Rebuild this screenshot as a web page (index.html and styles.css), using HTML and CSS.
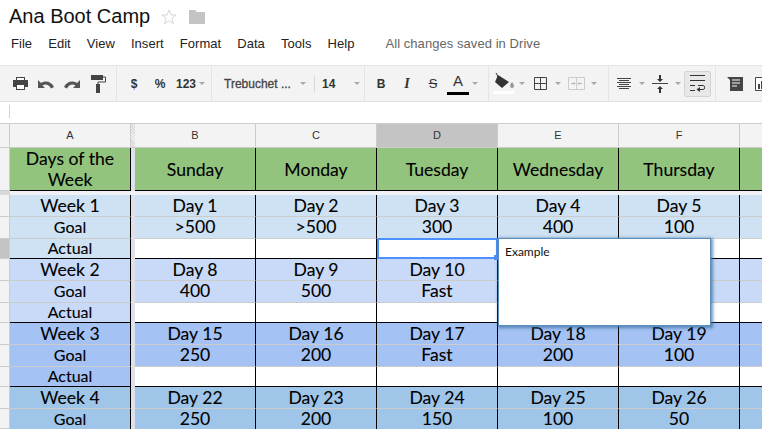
FILE: index.html
```html
<!DOCTYPE html>
<html lang="en">
<head>
<meta charset="UTF-8">
<title>Ana Boot Camp</title>
<link rel="stylesheet" href="styles.css">
</head>
<body>
<header class="title-row">
    <h1>Ana Boot Camp</h1>
    <svg class="star" width="16" height="16" viewBox="0 0 16 16"><path d="M8 1l2 5h5l-4 3.400 1.500 5.400L8 11.600l-4.500 3.200L5 9.400 1 6h5z" fill="#fff" stroke="#d4d4d4"/></svg>
    <svg class="folder" width="16" height="14" viewBox="0 0 16 14"><path d="M0 0h6l2 2h8v12H0z" fill="#c4c4c4"/></svg>
</header>
<nav class="menu-row">
    <a>File</a><a>Edit</a><a>View</a><a>Insert</a><a>Format</a><a>Data</a><a>Tools</a><a>Help</a>
    <span class="saved">All changes saved in Drive</span>
</nav>
<div class="toolbar">
    <div class="group group-history">
        <span class="tool"><svg width="15" height="13" viewBox="0 0 15 13"><path d="M3 0h9v3h3v7h-3v3H3v-3H0V3h3z" fill="#444"/><path d="M4 1h7v2H4zM4 8h7v4H4z" fill="#fff"/></svg></span>
        <span class="tool"><svg width="16" height="10" viewBox="0 0 16 10"><path d="M0 1v8h7L4.500 6.500C7.500 4.500 11 5.500 13 9.500L16 8C13.500 2.500 7.500 1 3 4z" fill="#555"/></svg></span>
        <span class="tool"><svg width="16" height="10" viewBox="0 0 16 10"><path d="M16 1v8H9l2.500-2.500C8.500 4.500 5 5.500 3 9.500L0 8C2.500 2.500 8.500 1 13 4z" fill="#555"/></svg></span>
        <span class="tool"><svg width="15" height="18" viewBox="0 0 15 18"><path d="M0 0h12v5H0z" fill="#444"/><path d="M12 2h2.500v5H7v3" fill="none" stroke="#444"/><path d="M5 9h4v9H5z" fill="#444"/></svg></span>
    </div>
    <div class="group group-number">
        <span class="tool"><b class="glyph">$</b></span>
        <span class="tool"><b class="glyph">%</b></span>
        <b class="glyph number-format">123</b><i class="caret"></i>
    </div>
    <div class="group group-font">
        <b class="font-name">Trebuchet ...</b><i class="caret"></i>
        <span class="short-sep"></span>
        <b class="font-size">14</b><i class="caret"></i>
    </div>
    <div class="group group-style">
        <span class="tool"><b class="glyph glyph-b">B</b></span>
        <span class="tool"><b class="glyph glyph-i">I</b></span>
        <span class="tool"><b class="glyph glyph-s">S</b></span>
        <span class="tool tool-color"><span class="glyph-a">A</span><span class="color-bar"></span></span><i class="caret"></i>
    </div>
    <div class="group group-cell">
        <span class="tool"><svg width="22" height="21" viewBox="0 0 22 21"><path d="M5 2l11 7-7 6-7-6z" fill="#333"/><path d="M3 0l4 7" stroke="#333" fill="none"/><path d="M19 9c1.500 2 2 3 2 4a2 2 0 0 1-4 0c0-1 .5-2 2-4z" fill="#999"/><path d="M0 18h21v3H0z" fill="#fff"/></svg></span><i class="caret"></i>
        <span class="tool"><svg width="13" height="13" viewBox="0 0 13 13"><path d="M.5.500h12v12H.5zM6.500.500v12M.5 6.500h12" fill="none" stroke="#444"/></svg></span><i class="caret"></i>
        <span class="tool"><svg width="17" height="13" viewBox="0 0 17 13"><path d="M.5.500h16v12H.5zM8.500.500v12" fill="none" stroke="#ccc"/><path d="M3 6.500h4M5.500 5l1.500 1.500L5.500 8M14 6.500h-4M11.500 5L10 6.500 11.500 8" fill="none" stroke="#bbb"/></svg></span><i class="caret"></i>
    </div>
    <div class="group group-align">
        <span class="tool"><svg width="14" height="11" viewBox="0 0 14 11"><path d="M0 .5h14M2 2.500h10M0 4.500h14M2 6.500h10M0 8.500h14M2 10.500h10" stroke="#444"/></svg></span><i class="caret"></i>
        <span class="tool"><svg width="16" height="18" viewBox="0 0 16 18"><path d="M0 8.500h16" stroke="#444"/><path d="M7 0h2v4h2L8 7 5 4h2zM7 18h2v-4h2l-3-3-3 3h2z" fill="#333"/></svg></span><i class="caret"></i>
        <span class="tool tool-active"><svg width="15" height="17" viewBox="0 0 15 17"><path d="M0 .5h15M0 5.500h15M0 10.500h5M0 15.500h5" stroke="#333"/><path d="M8 10.500h5.500q1 0 1 2t-1 2H9" fill="none" stroke="#333"/><path d="M10 12v5L6.500 14.500z" fill="#333"/></svg></span>
    </div>
    <div class="group group-insert">
        <span class="tool"><svg width="16" height="14" viewBox="0 0 16 14"><path d="M0 0h16v14H3V3z" fill="#444"/><path d="M5 3h8M5 6h8M5 9h5" stroke="#fff"/></svg></span>
        <span class="tool"><svg width="14" height="16" viewBox="0 0 14 16"><path d="M1.500 1.500h11v13h-11z" fill="#fff" stroke="#444"/><path d="M4 8h2v5H4zM7 5h2v8H7zM10 9h2v4h-2z" fill="#444"/></svg></span>
    </div>
</div>
<div class="formula-bar"><span class="cursor"></span></div>
<div class="sheet">
    <div class="corner"></div>
    <div class="col-head">A</div><div class="freeze-col"></div>
    <div class="col-head">B</div><div class="col-head">C</div><div class="col-head col-active">D</div><div class="col-head">E</div><div class="col-head">F</div><div class="col-head"></div>

    <div class="row-head"></div>
    <div class="cell days title-cell">Days of the Week</div><div class="gap"></div>
    <div class="cell days">Sunday</div><div class="cell days">Monday</div><div class="cell days">Tuesday</div><div class="cell days">Wednesday</div><div class="cell days">Thursday</div><div class="cell days"></div>

    <div class="freeze-row"></div>

    <div class="row-head"></div>
    <div class="cell week1 top">Week 1</div><div class="gap"></div>
    <div class="cell week1 top">Day 1</div><div class="cell week1 top">Day 2</div><div class="cell week1 top">Day 3</div><div class="cell week1 top">Day 4</div><div class="cell week1 top">Day 5</div><div class="cell week1"></div>
    <div class="row-head"></div>
    <div class="cell week1 small">Goal</div><div class="gap"></div>
    <div class="cell week1">&gt;500</div><div class="cell week1">&gt;500</div><div class="cell week1">300</div><div class="cell week1">400</div><div class="cell week1">100</div><div class="cell week1"></div>
    <div class="row-head row-active"></div>
    <div class="cell week1 small end">Actual</div><div class="gap"></div>
    <div class="cell end"></div><div class="cell end"></div><div class="cell end selected"><span class="handle"></span></div><div class="cell end"></div><div class="cell end"></div><div class="cell end"></div>

    <div class="row-head"></div>
    <div class="cell week2 top">Week 2</div><div class="gap"></div>
    <div class="cell week2 top">Day 8</div><div class="cell week2 top">Day 9</div><div class="cell week2 top">Day 10</div><div class="cell week2 top">Day 11</div><div class="cell week2 top">Day 12</div><div class="cell week2"></div>
    <div class="row-head"></div>
    <div class="cell week2 small">Goal</div><div class="gap"></div>
    <div class="cell week2">400</div><div class="cell week2">500</div><div class="cell week2">Fast</div><div class="cell week2">200</div><div class="cell week2">100</div><div class="cell week2"></div>
    <div class="row-head"></div>
    <div class="cell week2 small end">Actual</div><div class="gap"></div>
    <div class="cell end"></div><div class="cell end"></div><div class="cell end"></div><div class="cell end"></div><div class="cell end"></div><div class="cell end"></div>

    <div class="row-head"></div>
    <div class="cell week3 top">Week 3</div><div class="gap"></div>
    <div class="cell week3 top">Day 15</div><div class="cell week3 top">Day 16</div><div class="cell week3 top">Day 17</div><div class="cell week3 top">Day 18</div><div class="cell week3 top">Day 19</div><div class="cell week3"></div>
    <div class="row-head"></div>
    <div class="cell week3 small">Goal</div><div class="gap"></div>
    <div class="cell week3">250</div><div class="cell week3">200</div><div class="cell week3">Fast</div><div class="cell week3">200</div><div class="cell week3">100</div><div class="cell week3"></div>
    <div class="row-head"></div>
    <div class="cell week3 small end">Actual</div><div class="gap"></div>
    <div class="cell end"></div><div class="cell end"></div><div class="cell end"></div><div class="cell end"></div><div class="cell end"></div><div class="cell end"></div>

    <div class="row-head"></div>
    <div class="cell week4 top">Week 4</div><div class="gap"></div>
    <div class="cell week4 top">Day 22</div><div class="cell week4 top">Day 23</div><div class="cell week4 top">Day 24</div><div class="cell week4 top">Day 25</div><div class="cell week4 top">Day 26</div><div class="cell week4"></div>
    <div class="row-head"></div>
    <div class="cell week4 small last">Goal</div><div class="gap"></div>
    <div class="cell week4 last">250</div><div class="cell week4 last">200</div><div class="cell week4 last">150</div><div class="cell week4 last">100</div><div class="cell week4 last">50</div><div class="cell week4 last"></div>

    <div class="note">Example</div>
</div>
</body>
</html>
```

FILE: styles.css
```css
html, body {
    margin: 0;
    padding: 0;
    height: 429px;
    overflow: hidden;
    background-color: #fff;
    font-family: "Liberation Sans", Arial, sans-serif;
    color: #222;
}

/* title and menu */
.title-row {
    display: flex;
    align-items: center;
    height: 33px;
    padding-left: 9px;
}

.title-row h1 {
    margin: 0;
    font-size: 20px;
    font-weight: normal;
    color: #111;
}

.star {
    margin-left: 11px;
}

.folder {
    margin-left: 12px;
}

.menu-row {
    display: flex;
    align-items: center;
    gap: 16px;
    height: 20px;
    padding: 0 0 12px 11px;
    font-size: 13px;
    letter-spacing: 0.05px;
}

.saved {
    margin-left: 15px;
    color: #666;
    letter-spacing: 0.06px;
}

/* toolbar */
.toolbar {
    display: flex;
    height: 35px;
    background-color: #f3f3f3;
    border-top: 1px solid #e4e4e4;
    border-bottom: 1px solid #e0e0e0;
    overflow: hidden;
}

.group {
    display: flex;
    flex: none;
    align-items: center;
    box-sizing: border-box;
    border-right: 1px solid #e4e4e4;
}

.group-history { width: 117px; padding-left: 7px; }
.group-number { width: 95px; padding-left: 4px; }
.group-font { width: 153px; padding-left: 12px; }
.group-style { width: 124px; padding-left: 3px; }
.group-cell { width: 120px; padding-left: 2px; }
.group-align { width: 107px; padding-left: 2px; }
.group-insert { width: 60px; padding-left: 6px; border-right: 0; }

.tool {
    display: flex;
    flex: none;
    align-items: center;
    justify-content: center;
    width: 26px;
    height: 26px;
}

.tool-active {
    width: 27px;
    height: 26px;
    margin-left: 1px;
    box-sizing: border-box;
    background-color: #e8e8e8;
    border: 1px solid #d4d4d4;
    border-radius: 2px;
}

.tool-color {
    position: relative;
    width: 24px;
}

.glyph {
    font-size: 12px;
    color: #333;
}

.glyph-b { font-size: 12px; }
.glyph-i { font-family: "Liberation Serif", serif; font-size: 14px; font-style: italic; }
.glyph-s { font-weight: normal; font-size: 13px; text-decoration: line-through; }

.glyph-a {
    margin-top: -6px;
    font-size: 15px;
    color: #333;
}

.color-bar {
    position: absolute;
    left: 1px;
    bottom: 2px;
    width: 22px;
    height: 3px;
    background-color: #000;
}

.number-format {
    width: 21px;
    margin-left: 3px;
    font-size: 12px;
    color: #333;
}

.font-name {
    width: 74px;
    font-size: 12px;
    font-weight: normal;
    -webkit-text-stroke: 0.3px #444;
    color: #444;
    white-space: nowrap;
}

.font-size {
    width: 30px;
    font-size: 12px;
    color: #333;
}

.short-sep {
    width: 1px;
    height: 16px;
    margin: 0 7px 0 6px;
    background-color: #d8d8d8;
}

.caret {
    flex: none;
    width: 0;
    height: 0;
    margin: 0 2px;
    border: 3px solid transparent;
    border-top: 3px solid #aaa;
    border-bottom: 0;
}

/* formula bar */
.formula-bar {
    height: 21px;
    padding: 3px 0 0 9px;
    box-sizing: border-box;
}

.cursor {
    display: block;
    width: 1px;
    height: 13px;
    background-color: #c9d4e6;
}

/* sheet */
.sheet {
    position: relative;
    display: grid;
    grid-template-columns: 10px 121px 4px repeat(6, 121px);
    grid-template-rows: 24px 43px 4px 22px 22px 20px 22px 22px 20px 22px 22px 20px 22px 20px;
    border-top: 1px solid #ccc;
    overflow: hidden;
}

.corner, .row-head, .col-head {
    box-sizing: border-box;
    background-color: #f3f3f3;
    border-right: 1px solid #ccc;
    border-bottom: 1px solid #ccc;
}

.col-head {
    font-size: 11px;
    line-height: 23px;
    text-align: center;
    color: #333;
}

.col-active, .row-active {
    background-color: #c4c4c4;
}

.freeze-col {
    background: repeating-linear-gradient(45deg, #d8d8d8, #d8d8d8 1px, #f3f3f3 1px, #f3f3f3 2px);
    border-bottom: 1px solid #ccc;
    box-sizing: border-box;
}

.gap {
    background-color: #dfe1ea;
}

.freeze-row {
    grid-column: 1 / -1;
    background: linear-gradient(to right, #d8d8d8 10px, #f0f1f6 10px);
}

.cell {
    box-sizing: border-box;
    min-width: 0;
    overflow: hidden;
    font-family: Lato, "Noto Sans", sans-serif;
    font-size: 17.6px;
    line-height: 20px;
    text-align: center;
    color: #000;
    white-space: nowrap;
    -webkit-text-stroke: 0.1px #000;
    border-right: 1px solid #000;
    border-bottom: 1px solid #ccc;
}

.days {
    display: flex;
    align-items: center;
    justify-content: center;
    background-color: #93c47d;
    border-bottom-color: #000;
    white-space: normal;
    line-height: 21px;
}

.top { line-height: 22px; }
.small { font-size: 16px; }
.end { border-bottom-color: #000; line-height: 18px; }
.last { border-bottom: 0; }
.week1 { background-color: #cfe2f3; }
.week2 { background-color: #c9daf8; }
.week3 { background-color: #a4c2f4; }
.week4 { background-color: #9fc5e8; }

.selected {
    overflow: visible;
    position: relative;
    margin: -1px 0 0 0;
    height: 21px;
    border: 2px solid #4d90fe;
    z-index: 1;
}

.handle {
    position: absolute;
    right: -3px;
    bottom: -3px;
    width: 5px;
    height: 5px;
    background-color: #4d90fe;
}

/* comment box */
.note {
    position: absolute;
    left: 498px;
    top: 114px;
    z-index: 2;
    box-sizing: border-box;
    width: 213px;
    height: 88px;
    padding: 6px;
    background-color: #fff;
    border: 1px solid #5b8fbb;
    box-shadow: 1px 1px 3px 1px rgba(60, 110, 160, 0.75);
    font-family: Lato, "Noto Sans", sans-serif;
    font-size: 12px;
    line-height: 13px;
    color: #111;
}
```
